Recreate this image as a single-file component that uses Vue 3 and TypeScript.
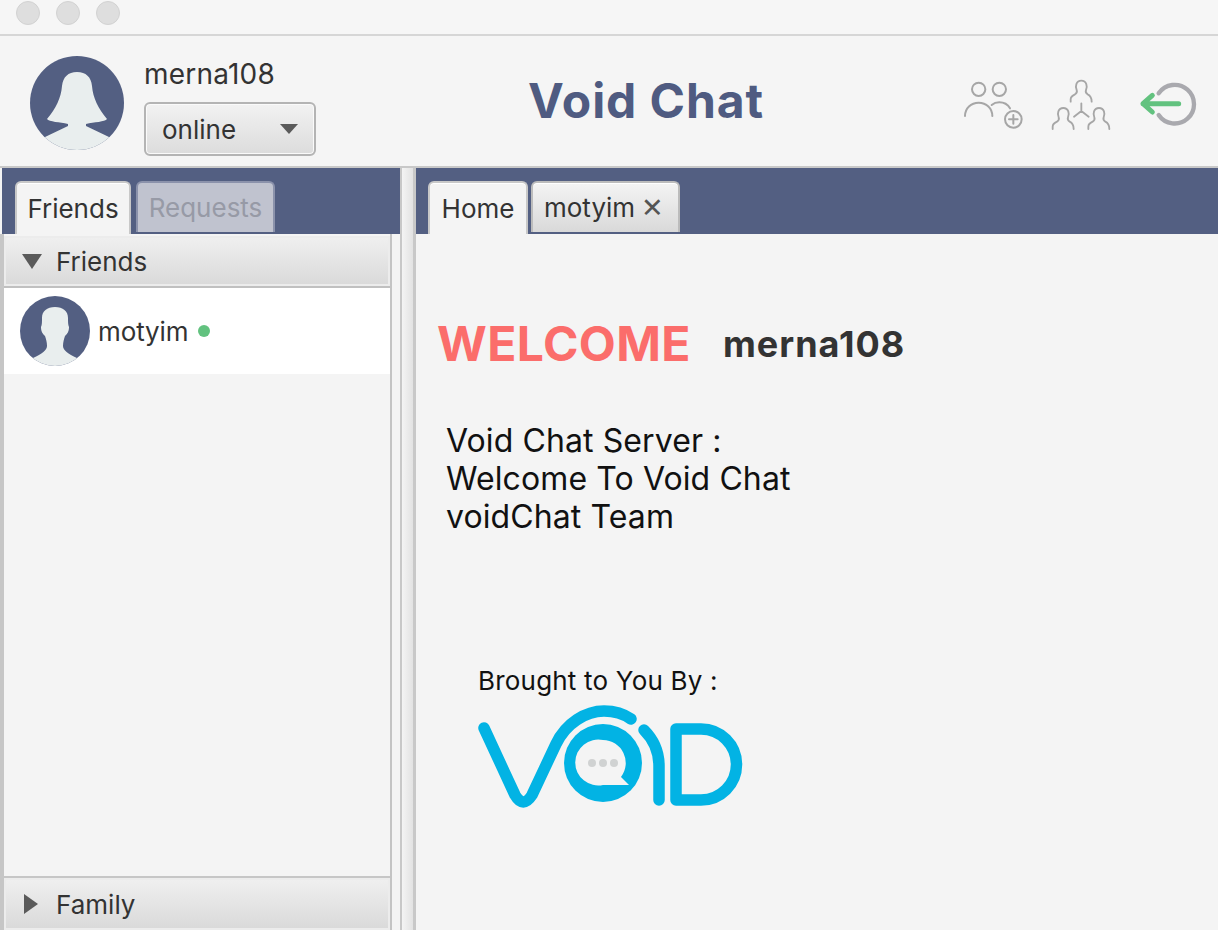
<template>
  <div class="window">
    <div class="titlebar">
      <span v-for="n in 3" :key="n" class="light"></span>
    </div>

    <header class="header">
      <svg class="avatar" viewBox="0 0 94 94">
        <circle cx="47" cy="47" r="47" fill="#535f82" />
        <clipPath id="me-clip"><circle cx="47" cy="47" r="47" /></clipPath>
        <path
          clip-path="url(#me-clip)"
          fill="#e9eeee"
          d="M47 16C38 16 33 21 32 30C31 42 26 52 17 63C19 66 30 66 38 68V70L15 81V100H79V81L56 70V68C64 66 75 66 77 63C68 52 63 42 62 30C61 21 56 16 47 16Z"
        />
      </svg>
      <div class="user">
        <div class="user-name">merna108</div>
        <div class="combo">
          <span>online</span>
          <i class="combo-arrow"></i>
        </div>
      </div>
      <h1 class="title">Void Chat</h1>
      <div class="actions">
        <svg class="icon" width="70" height="60" viewBox="60 45 210 180" fill="none" stroke="#a6a6a6" stroke-width="6" stroke-linecap="round">
          <circle cx="116" cy="88" r="20" />
          <circle cx="178" cy="88" r="20" />
          <path d="M75 168C75 145 93 128 116 128C139 128 157 145 157 168" />
          <path d="M155 135C162 129 170 127 178 127C191 127 203 133 210 145" />
          <circle cx="220" cy="178" r="25" />
          <path d="M207 178H233M220 165V191" />
        </svg>
        <svg class="icon" width="70" height="60" viewBox="315 45 210 180" fill="none" stroke="#a6a6a6" stroke-width="5.5" stroke-linecap="round" stroke-linejoin="round">
          <path v-for="p in people" :key="p" :transform="p" :d="person" />
          <path d="M424 130V153M424 153L402 170M424 153L446 170" />
        </svg>
        <svg class="icon logout" width="66" height="60" viewBox="590 45 198 180" fill="none" stroke-linecap="round" stroke-linejoin="round">
          <path d="M655 100A58 58 0 1 1 655 165" stroke="#a9a9ae" stroke-width="13" />
          <path d="M715 131H608M636 106L608 131L636 156" stroke="#62c27f" stroke-width="15" />
        </svg>
      </div>
    </header>

    <main class="body">
      <section class="left">
        <div class="tab-band">
          <div class="tab active friends-tab">Friends</div>
          <div class="tab disabled">Requests</div>
        </div>
        <div class="accordion">
          <div class="acc-title">
            <i class="arrow-down"></i>
            <span>Friends</span>
          </div>
          <div class="friend">
            <svg class="friend-avatar" viewBox="0 0 70 70">
              <circle cx="35" cy="35" r="35" fill="#535f82" />
              <clipPath id="friend-clip"><circle cx="35" cy="35" r="35" /></clipPath>
              <path
                clip-path="url(#friend-clip)"
                fill="#e9eeee"
                d="M35 11C27 11 22 15 22 22C22 26 22 29 21 31C21 36 23 38 25 40C26 43 27 46 27 50C27 54 22 58 13 62V75H57V62C48 58 43 54 43 50C43 46 44 43 45 40C47 38 49 36 49 31C48 29 48 26 48 22C48 15 43 11 35 11Z"
              />
            </svg>
            <span class="friend-name">motyim</span>
            <i class="status-dot"></i>
          </div>
          <div class="acc-space"></div>
          <div class="acc-title last">
            <i class="arrow-right"></i>
            <span>Family</span>
          </div>
        </div>
      </section>

      <div class="divider"></div>

      <section class="right">
        <div class="tab-band right-band">
          <div class="tab active home-tab">Home</div>
          <div class="tab chat-tab">motyim <span class="close">✕</span></div>
        </div>
        <div class="home">
          <div class="welcome">
            <span class="welcome-word">WELCOME</span>
            <span class="welcome-name">merna108</span>
          </div>
          <div class="server-msg">
            <div v-for="line in serverLines" :key="line">{{ line }}</div>
          </div>
          <div class="brought">Brought to You By :</div>
          <svg class="logo" width="300" height="130" viewBox="0 0 300 130" fill="none" stroke="#02b3e4" stroke-width="11.5" stroke-linecap="round" stroke-linejoin="round">
            <path d="M23 38L54 105Q62 119 71 105L95 54C105 33 125 21 143 21C153 21 163 24 170 29" />
            <path d="M183 40C193 50 198 62 198 76V110" />
            <path d="M215 39H240A35.5 35.5 0 0 1 240 110H215Z" />
            <circle cx="142" cy="73" r="39" fill="#02b3e4" stroke="none" />
            <path d="M142 50A23 23 0 1 0 142 95H168L160 87A23 23 0 0 0 142 50Z" fill="#f4f4f4" stroke="none" />
            <g fill="#d0d2d2" stroke="none">
              <circle cx="131" cy="73" r="4" />
              <circle cx="142" cy="73" r="4" />
              <circle cx="153" cy="73" r="4" />
            </g>
          </svg>
        </div>
      </section>
    </main>
  </div>
</template>

<script setup lang="ts">
const serverLines: string[] = ['Void Chat Server :', 'Welcome To Void Chat', 'voidChat Team']

const person =
  'M392 125V118Q392 109 405 103Q413 98 410 90C405 80 408 62 424 62C440 62 443 80 438 90Q435 98 443 103Q455 109 455 125'
const people: string[] = ['translate(0 0)', 'translate(-54 82)', 'translate(53 82)']
</script>

<style>
html,
body {
  margin: 0;
  background: #f4f4f4;
}
</style>

<style scoped>
.window {
  width: 1218px;
  height: 930px;
  overflow: hidden;
  display: flex;
  flex-direction: column;
  background: #f4f4f4;
  color: #333;
  font-family: Inter, "Liberation Sans", sans-serif;
}

.titlebar {
  height: 36px;
  flex: none;
  display: flex;
  gap: 16px;
  padding: 1px 0 0 16px;
  box-sizing: border-box;
  background: #f6f6f6;
  border-bottom: 2px solid #d6d6d6;
}

.light {
  width: 24px;
  height: 24px;
  box-sizing: border-box;
  border-radius: 50%;
  background: #dedede;
  border: 1px solid #d2d2d2;
}

.header {
  height: 132px;
  flex: none;
  display: flex;
  align-items: flex-start;
  box-sizing: border-box;
  background: #f5f5f5;
  border-bottom: 2px solid #c8c8c8;
}

.avatar {
  width: 94px;
  height: 94px;
  margin: 20px 0 0 30px;
  flex: none;
}

.user {
  margin: 21px 0 0 20px;
  width: 172px;
  flex: none;
}

.user-name {
  font-size: 28px;
  line-height: 34px;
  letter-spacing: 0.2px;
  color: #333;
}

.combo {
  margin-top: 11px;
  height: 54px;
  box-sizing: border-box;
  display: flex;
  align-items: center;
  justify-content: space-between;
  padding: 0 16px;
  border: 2px solid #b4b4b4;
  border-radius: 6px;
  background: linear-gradient(#f2f2f2, #dcdcdc);
  box-shadow: inset 0 0 0 1px #fafafa;
  font-size: 26px;
  color: #333;
}

.combo-arrow {
  width: 0;
  height: 0;
  border-left: 9px solid transparent;
  border-right: 9px solid transparent;
  border-top: 10px solid #5a5a5a;
}

.title {
  margin: 36px 0 0 212px;
  font-size: 48px;
  line-height: 58px;
  font-weight: 700;
  letter-spacing: 0.9px;
  color: #4f5b81;
  white-space: nowrap;
}

.actions {
  margin-left: auto;
  margin-top: 2px;
  padding: 37px 15px 0 0;
  display: flex;
  gap: 15px;
}

.icon {
  flex: none;
}

.logout {
  margin-left: 7px;
}

.body {
  flex: 1;
  display: flex;
  min-height: 0;
}

.left {
  width: 400px;
  flex: none;
  display: flex;
  flex-direction: column;
  box-sizing: border-box;
  padding-left: 2px;
}

.tab-band {
  height: 66px;
  flex: none;
  display: flex;
  align-items: flex-end;
  gap: 5px;
  box-sizing: border-box;
  padding-left: 13px;
  background: #535f82;
}

.tab {
  height: 51px;
  box-sizing: border-box;
  padding: 0 11px;
  display: flex;
  align-items: center;
  gap: 6px;
  margin-bottom: 2px;
  border: 2px solid #bcbcbc;
  border-bottom: none;
  border-radius: 6px 6px 0 0;
  background: linear-gradient(#f4f4f4, #d9d9d9);
  box-shadow: inset 0 1px 0 #fff;
  font-size: 26px;
  color: #333;
}

.tab.active {
  height: 53px;
  margin-bottom: 0;
  background: #f4f4f4;
  border-color: #c8c8c8;
  color: #333;
}

.friends-tab {
  width: 116px;
  justify-content: center;
}

.tab.disabled {
  width: 139px;
  justify-content: center;
  background: #c0c3cf;
  border-color: #8b92ab;
  box-shadow: none;
  color: #979aa6;
}

.accordion {
  flex: 1;
  min-height: 0;
  display: flex;
  flex-direction: column;
  width: 392px;
  margin-left: -2px;
  box-sizing: border-box;
  padding-top: 2px;
  border-left: 4px solid #c6c6c6;
  border-right: 2px solid #c4c4c4;
}

.acc-title {
  height: 52px;
  flex: none;
  box-sizing: border-box;
  display: flex;
  align-items: center;
  padding-left: 18px;
  gap: 14px;
  border-bottom: 2px solid #c0c0c0;
  background: linear-gradient(#f0f0f0, #d9d9d9);
  box-shadow: inset 0 0 0 2px #ececec;
  font-size: 26px;
  color: #333;
}

.acc-title.last {
  border-bottom: none;
}

.arrow-down {
  width: 0;
  height: 0;
  border-left: 10px solid transparent;
  border-right: 10px solid transparent;
  border-top: 15px solid #5a5a5a;
}

.arrow-right {
  width: 0;
  height: 0;
  margin: 0 4px 0 2px;
  border-top: 10px solid transparent;
  border-bottom: 10px solid transparent;
  border-left: 14px solid #5a5a5a;
}

.friend {
  height: 86px;
  flex: none;
  display: flex;
  align-items: center;
  padding-left: 16px;
  background: #fff;
}

.friend-avatar {
  width: 70px;
  height: 70px;
  flex: none;
}

.friend-name {
  margin-left: 8px;
  font-size: 26px;
  letter-spacing: -0.1px;
  color: #333;
}

.status-dot {
  width: 12px;
  height: 12px;
  margin-left: 10px;
  border-radius: 50%;
  background: #62c27f;
}

.acc-space {
  flex: 1;
  border-bottom: 2px solid #c6c6c6;
}

.divider {
  width: 16px;
  flex: none;
  box-sizing: border-box;
  border-left: 2px solid #c8c8c8;
  border-right: 3px solid #c8c8c8;
  background: linear-gradient(90deg, #f4f4f4, #e2e2e2);
}

.right {
  flex: 1;
  min-width: 0;
  display: flex;
  flex-direction: column;
}

.right-band {
  padding-left: 12px;
  gap: 3px;
}

.home-tab {
  width: 100px;
  justify-content: center;
}

.chat-tab {
  width: 149px;
}

.close {
  font-size: 27px;
  line-height: 26px;
  color: #555;
}

.home {
  flex: 1;
  padding-left: 21px;
}

.welcome {
  margin-top: 79px;
  display: flex;
  align-items: center;
  gap: 32px;
  height: 60px;
}

.welcome-word {
  font-size: 48px;
  font-weight: 700;
  letter-spacing: 0.4px;
  color: #fb6d6b;
}

.welcome-name {
  margin-top: 2px;
  font-size: 36px;
  font-weight: 700;
  letter-spacing: 1px;
  color: #333;
}

.server-msg {
  margin: 49px 0 0 9px;
  font-size: 32px;
  line-height: 38px;
  letter-spacing: 0.1px;
  color: #111;
}

.brought {
  margin: 128px 0 0 41px;
  font-size: 26px;
  line-height: 34px;
  letter-spacing: 0.2px;
  color: #111;
}

.logo {
  display: block;
  margin: -8px 0 0 24px;
}
</style>
